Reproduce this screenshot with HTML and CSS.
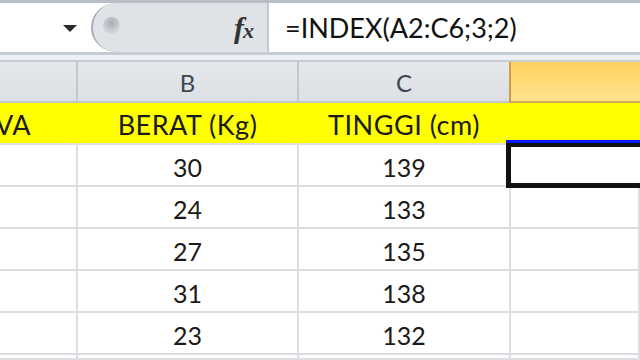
FILE: index.html
```html
<!DOCTYPE html>
<html lang="en">
<head>
  <meta charset="UTF-8">
  <title>INDEX - Excel</title>
  <link rel="stylesheet" href="styles.css">
</head>
<body>

  <!-- Formula bar -->
  <div class="formula-bar">
    <div class="name-box">
      <span class="arrow"></span>
    </div>
    <div class="fx-area">
      <span class="grip"></span>
      <span class="fx"><i>f</i><i class="x">x</i></span>
    </div>
    <div class="formula-input">=INDEX(A2:C6;3;2)</div>
  </div>

  <div class="band"></div>

  <!-- Sheet -->
  <div class="sheet">
    <div class="row head">
      <div class="cell"></div>
      <div class="cell">B</div>
      <div class="cell">C</div>
      <div class="cell active"></div>
    </div>

    <div class="row title">
      <div class="cell first">VA</div>
      <div class="cell">BERAT (Kg)</div>
      <div class="cell">TINGGI (cm)</div>
      <div class="cell"></div>
    </div>

    <div class="row">
      <div class="cell"></div>
      <div class="cell">30</div>
      <div class="cell">139</div>
      <div class="cell selected"></div>
    </div>
    <div class="row">
      <div class="cell"></div>
      <div class="cell">24</div>
      <div class="cell">133</div>
      <div class="cell"></div>
    </div>
    <div class="row">
      <div class="cell"></div>
      <div class="cell">27</div>
      <div class="cell">135</div>
      <div class="cell"></div>
    </div>
    <div class="row">
      <div class="cell"></div>
      <div class="cell">31</div>
      <div class="cell">138</div>
      <div class="cell"></div>
    </div>
    <div class="row">
      <div class="cell"></div>
      <div class="cell">23</div>
      <div class="cell">132</div>
      <div class="cell"></div>
    </div>
    <div class="row last">
      <div class="cell"></div>
      <div class="cell"></div>
      <div class="cell"></div>
      <div class="cell"></div>
    </div>
  </div>

</body>
</html>
```

FILE: styles.css
```css
* {
  margin: 0;
  padding: 0;
  box-sizing: border-box;
}

body {
  width: 640px;
  height: 360px;
  overflow: hidden;
  background: #fff;
  font-family: 'Lato', 'Open Sans', sans-serif;
  color: #1b1b1b;
}

/* Formula bar */
.formula-bar {
  display: flex;
  height: 52px;
  border-top: 3px solid #b9bec6;
  background: #fff;
}

.name-box {
  width: 91px;
  display: flex;
  align-items: center;
  justify-content: flex-end;
  padding-right: 14px;
}

.arrow {
  width: 0;
  height: 0;
  border-left: 7px solid transparent;
  border-right: 7px solid transparent;
  border-top: 7px solid #2b2b2b;
  margin-top: 1px;
}

.fx-area {
  width: 178px;
  display: flex;
  align-items: center;
  justify-content: space-between;
  padding: 0 14px 0 10px;
  background: #dfe2e7;
  border-left: 2px solid #a9aeb6;
  border-right: 2px solid #c4c8ce;
  border-radius: 26px 0 0 26px / 24px 0 0 24px;
}

.grip {
  width: 17px;
  height: 17px;
  border-radius: 50%;
  background: radial-gradient(circle at 50% 35%, #a9adb3, #d2d5da 70%);
  margin-top: -4px;
}

.fx {
  font-family: 'Liberation Serif', serif;
  font-weight: bold;
  font-size: 30px;
  color: #333;
  letter-spacing: -1px;
}

.fx .x {
  font-size: 22px;
}

.formula-input {
  flex: 1;
  padding-left: 16px;
  display: flex;
  align-items: center;
  font-size: 27px;
  color: #111;
  white-space: nowrap;
}

.band {
  height: 10px;
  background: #edf0f4;
  border-top: 3px solid #c6ccd4;
  border-bottom: 2px solid #c8cdd4;
}

/* Sheet grid */
.row {
  display: grid;
  grid-template-columns: 78px 221px 212px 129px;
  height: 42px;
}

.row.last {
  height: 5px;
}

.cell {
  display: flex;
  align-items: center;
  justify-content: center;
  padding-top: 3px;
  font-size: 25px;
  white-space: nowrap;
  border-right: 2px solid #dcdee1;
  border-bottom: 2px solid #dcdee1;
}

.row.head {
  height: 41px;
}

.row.head .cell {
  padding-top: 2px;
  font-size: 24px;
  color: #3f4650;
  background: linear-gradient(#e5e8ec, #dcdfe4);
  border-right: 2px solid #c3c8cf;
  border-bottom: 2px solid #c0c5cc;
}

.row.head .cell.active {
  background: linear-gradient(#fdd35f, #ffe48e);
  border-left: 2px solid #cf9d45;
  border-right: 0;
  border-bottom-color: #d9a74c;
  margin-left: -2px;
}

.row.title .cell {
  background: #ffff00;
  border-right-color: #ffff00;
  font-size: 27px;
  letter-spacing: 0.5px;
}

.row.title .cell.first {
  justify-content: flex-end;
  padding-right: 45px;
}

.cell.selected {
  position: relative;
  border-right: 0;
}

.cell.selected::after {
  content: "";
  position: absolute;
  top: -2px;
  left: -5px;
  right: 0;
  bottom: -3px;
  border: 5px solid #111;
  border-top: 4px solid #111;
  border-right: 0;
  box-shadow: 0 -3px 0 #0a1aff;
}
```
